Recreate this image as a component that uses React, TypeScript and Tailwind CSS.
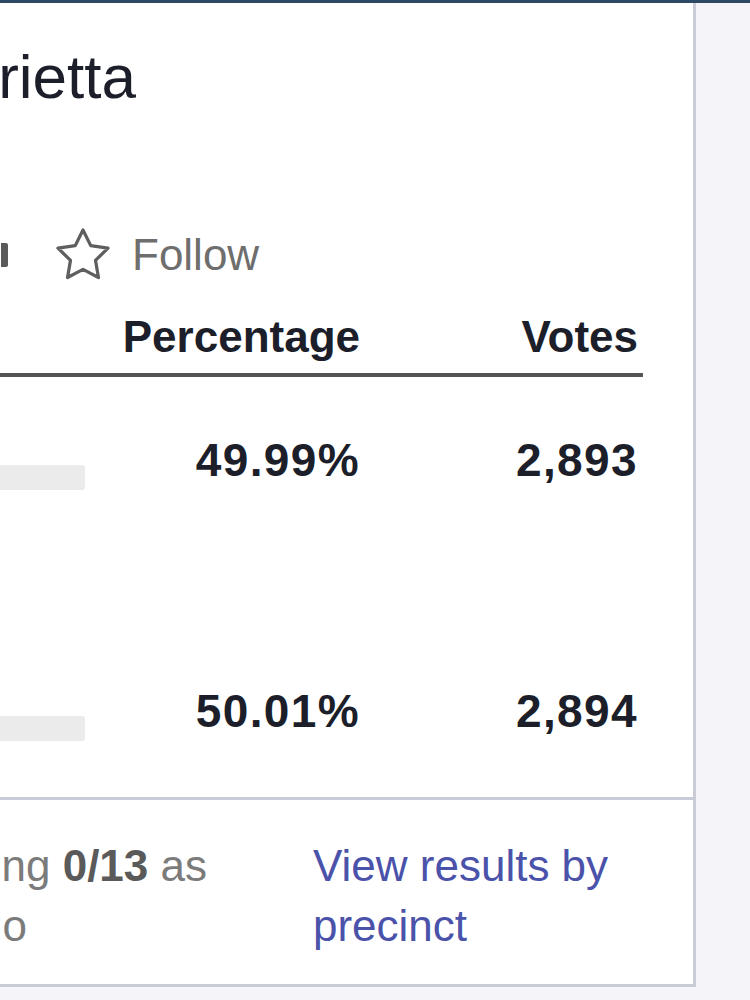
import React from 'react';

const results = [
  { pct: '49.99%', votes: '2,893', rowClass: 'h-[251px]' },
  { pct: '50.01%', votes: '2,894', rowClass: 'h-[116px]' },
];

const StarOutline = () => (
  <svg viewBox="0 0 24 24" className="w-[60px] h-[60px] shrink-0" fill="none" stroke="#5f5f5f" strokeWidth={1.3} strokeLinejoin="round">
    <polygon points="12,2 15.09,8.26 22,9.27 17,14.14 18.18,21.02 12,17.77 5.82,21.02 7,14.14 2,9.27 8.91,8.26" />
  </svg>
);

export default function App() {
  return (
    <div className="w-[750px] h-[1000px] overflow-hidden bg-[#f5f5f9] font-['Liberation_Sans',Arial,sans-serif]">
      <div className="h-[3px] bg-[#2d4864]" />

      <div className="w-[696px] h-[984px] bg-white border-r-[3px] border-b-[3px] border-[#c9ccd6] flex flex-col">
        {/* Title, cut at the left edge */}
        <div className="pt-[43px] h-[104px] flex">
          <div className="w-[136px] flex justify-end">
            <span className="shrink-0 whitespace-nowrap text-[62px] leading-[62px] text-[#1c1f2a]">Marietta</span>
          </div>
        </div>

        {/* Actions */}
        <div className="mt-[118px] h-[60px] flex items-center">
          <div className="w-[8px] flex justify-end">
            <div className="w-[7px] h-[24px] bg-[#5a5a5a] rounded-r-[2px]" />
          </div>
          <div className="ml-[45px]">
            <StarOutline />
          </div>
          <span className="ml-[19px] text-[44px] leading-[60px] text-[#6e6e6e]">Follow</span>
        </div>

        {/* Results table */}
        <div className="mt-[22px] w-[643px] flex pr-[5px] pb-[6px] border-b-[4px] border-[#555] text-[44px] leading-[60px] font-bold text-[#1c1f2a]">
          <div className="w-[118px] shrink-0" />
          <div className="w-[242px] shrink-0 text-right whitespace-nowrap">Percentage</div>
          <div className="flex-1 text-right">Votes</div>
        </div>

        <div className="pt-[53px]">
          {results.map((r) => (
            <div key={r.votes} className={`${r.rowClass} w-[643px] pr-[5px] flex items-start text-[46px] leading-[60px] font-bold text-[#1c1f2a] tracking-[0.03em]`}>
              <div className="w-[118px] shrink-0 pt-[35px]">
                <div className="w-[85px] h-[25px] bg-[#ebebeb] rounded-r-[3px]" />
              </div>
              <div className="w-[242px] shrink-0 text-right">{r.pct}</div>
              <div className="flex-1 text-right">{r.votes}</div>
            </div>
          ))}
        </div>

        {/* Footer */}
        <div className="border-t-[3px] border-[#c8cbd8] pt-[36px] flex text-[44px] leading-[60px]">
          <div className="w-[313px] shrink-0 text-[#7b7b7b]">
            <div className="w-[207px] flex justify-end">
              <span className="shrink-0 whitespace-nowrap">
                Reporting <span className="font-bold text-[#5a5a5a]">0/13</span> as
              </span>
            </div>
            <div className="w-[27px] flex justify-end">
              <span className="shrink-0 whitespace-nowrap">of an hour ago</span>
            </div>
          </div>
          <a className="w-[340px] text-[#4a52aa]">View results by precinct</a>
        </div>
      </div>
    </div>
  );
}
